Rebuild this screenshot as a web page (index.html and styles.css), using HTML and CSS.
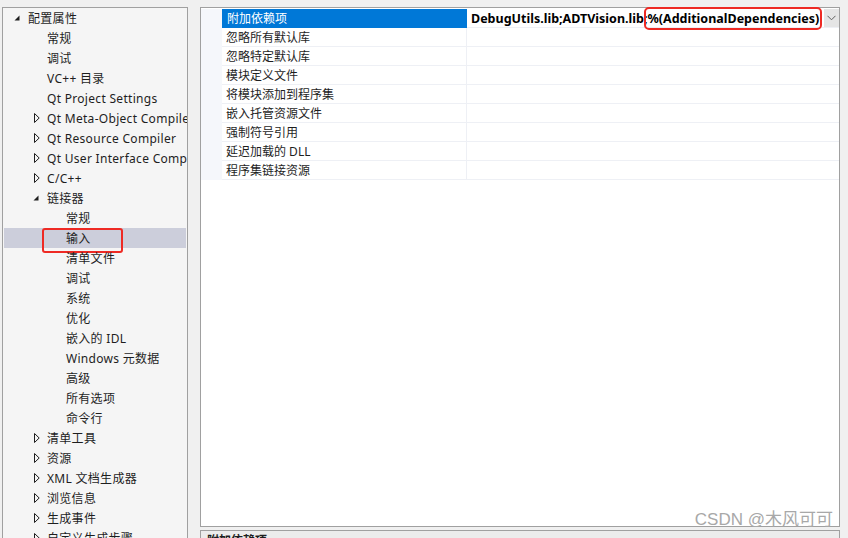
FILE: index.html
```html
<!DOCTYPE html>
<html lang="zh-CN">
<head>
  <meta charset="UTF-8" />
  <title>属性页 - 链接器 输入</title>
  <link rel="stylesheet" href="styles.css">
</head>
<body>
  <div class="dialog">
    <!-- left: configuration tree -->
    <div class="tree">
      <div class="row lv0"><span class="arrow"><svg width="6" height="6" viewBox="0 0 6 6"><path d="M5.5 0.5 L5.5 5.5 L0.5 5.5 Z" fill="#1e1e1e"/></svg></span>配置属性</div>
      <div class="row lv1"><span class="arrow"></span>常规</div>
      <div class="row lv1"><span class="arrow"></span>调试</div>
      <div class="row lv1"><span class="arrow"></span>VC++ 目录</div>
      <div class="row lv1"><span class="arrow"></span>Qt Project Settings</div>
      <div class="row lv1"><span class="arrow closed"><svg width="6" height="10" viewBox="0 0 6 10"><path d="M0.5 0.5 L5.2 5 L0.5 9.5 Z" fill="none" stroke="#1e1e1e"/></svg></span>Qt Meta-Object Compiler</div>
      <div class="row lv1"><span class="arrow closed"><svg width="6" height="10" viewBox="0 0 6 10"><path d="M0.5 0.5 L5.2 5 L0.5 9.5 Z" fill="none" stroke="#1e1e1e"/></svg></span>Qt Resource Compiler</div>
      <div class="row lv1"><span class="arrow closed"><svg width="6" height="10" viewBox="0 0 6 10"><path d="M0.5 0.5 L5.2 5 L0.5 9.5 Z" fill="none" stroke="#1e1e1e"/></svg></span>Qt User Interface Compiler</div>
      <div class="row lv1"><span class="arrow closed"><svg width="6" height="10" viewBox="0 0 6 10"><path d="M0.5 0.5 L5.2 5 L0.5 9.5 Z" fill="none" stroke="#1e1e1e"/></svg></span>C/C++</div>
      <div class="row lv1"><span class="arrow"><svg width="6" height="6" viewBox="0 0 6 6"><path d="M5.5 0.5 L5.5 5.5 L0.5 5.5 Z" fill="#1e1e1e"/></svg></span>链接器</div>
      <div class="row lv2"><span class="arrow"></span>常规</div>
      <div class="row lv2 selected"><span class="arrow"></span>输入<span class="annot"></span></div>
      <div class="row lv2"><span class="arrow"></span>清单文件</div>
      <div class="row lv2"><span class="arrow"></span>调试</div>
      <div class="row lv2"><span class="arrow"></span>系统</div>
      <div class="row lv2"><span class="arrow"></span>优化</div>
      <div class="row lv2"><span class="arrow"></span>嵌入的 IDL</div>
      <div class="row lv2"><span class="arrow"></span>Windows 元数据</div>
      <div class="row lv2"><span class="arrow"></span>高级</div>
      <div class="row lv2"><span class="arrow"></span>所有选项</div>
      <div class="row lv2"><span class="arrow"></span>命令行</div>
      <div class="row lv1"><span class="arrow closed"><svg width="6" height="10" viewBox="0 0 6 10"><path d="M0.5 0.5 L5.2 5 L0.5 9.5 Z" fill="none" stroke="#1e1e1e"/></svg></span>清单工具</div>
      <div class="row lv1"><span class="arrow closed"><svg width="6" height="10" viewBox="0 0 6 10"><path d="M0.5 0.5 L5.2 5 L0.5 9.5 Z" fill="none" stroke="#1e1e1e"/></svg></span>资源</div>
      <div class="row lv1"><span class="arrow closed"><svg width="6" height="10" viewBox="0 0 6 10"><path d="M0.5 0.5 L5.2 5 L0.5 9.5 Z" fill="none" stroke="#1e1e1e"/></svg></span>XML 文档生成器</div>
      <div class="row lv1"><span class="arrow closed"><svg width="6" height="10" viewBox="0 0 6 10"><path d="M0.5 0.5 L5.2 5 L0.5 9.5 Z" fill="none" stroke="#1e1e1e"/></svg></span>浏览信息</div>
      <div class="row lv1"><span class="arrow closed"><svg width="6" height="10" viewBox="0 0 6 10"><path d="M0.5 0.5 L5.2 5 L0.5 9.5 Z" fill="none" stroke="#1e1e1e"/></svg></span>生成事件</div>
      <div class="row lv1"><span class="arrow closed"><svg width="6" height="10" viewBox="0 0 6 10"><path d="M0.5 0.5 L5.2 5 L0.5 9.5 Z" fill="none" stroke="#1e1e1e"/></svg></span>自定义生成步骤</div>
    </div>

    <!-- right: property grid + description -->
    <div class="side">
      <div class="props">
        <div class="prop active">
          <div class="gutter"></div>
          <div class="name">附加依赖项</div>
          <div class="value">
            <span class="text">DebugUtils.lib;ADTVision.lib;<span class="mark">%(AdditionalDependencies)</span></span>
            <span class="drop"><svg width="9" height="6" viewBox="0 0 9 6"><path d="M0.5 0.8 L4.5 4.8 L8.5 0.8" fill="none" stroke="#606060"/></svg></span>
          </div>
        </div>
        <div class="prop"><div class="gutter"></div><div class="name">忽略所有默认库</div><div class="value"></div></div>
        <div class="prop"><div class="gutter"></div><div class="name">忽略特定默认库</div><div class="value"></div></div>
        <div class="prop"><div class="gutter"></div><div class="name">模块定义文件</div><div class="value"></div></div>
        <div class="prop"><div class="gutter"></div><div class="name">将模块添加到程序集</div><div class="value"></div></div>
        <div class="prop"><div class="gutter"></div><div class="name">嵌入托管资源文件</div><div class="value"></div></div>
        <div class="prop"><div class="gutter"></div><div class="name">强制符号引用</div><div class="value"></div></div>
        <div class="prop"><div class="gutter"></div><div class="name">延迟加载的 DLL</div><div class="value"></div></div>
        <div class="prop"><div class="gutter"></div><div class="name">程序集链接资源</div><div class="value"></div></div>
      </div>
      <div class="desc">
        <div class="desc-title">附加依赖项</div>
      </div>
    </div>
  </div>

  <div class="watermark">CSDN @木风可可</div>
</body>
</html>
```

FILE: styles.css
```css
/* Base */
* {
  box-sizing: border-box;
  margin: 0;
  padding: 0;
}

html, body {
  height: 100%;
}

body {
  font-family: "Noto Sans", "Noto Sans CJK SC", sans-serif;
  font-size: 12px;
  color: #1e1e1e;
  background: #f0f0f0;
  overflow: hidden;
  position: relative;
}

.dialog {
  display: flex;
  align-items: flex-start;
  padding: 7px 0 0 2px;
  gap: 12px;
  height: 100%;
  overflow: hidden;
}

/* Tree */
.tree {
  position: relative;
  width: 186px;
  height: 532px;
  flex: none;
  background: #f5f5f5;
  border: 1px solid #a0a0a0;
  border-bottom: none;
  overflow: hidden;
}

.row {
  position: relative;
  display: flex;
  align-items: center;
  height: 20px;
  margin: 0 1px;
  white-space: nowrap;
  letter-spacing: 0.3px;
}

.row.lv0 { padding-left: 9px; }
.row.lv1 { padding-left: 28px; }
.row.lv2 { padding-left: 47px; }

.row.selected {
  background: #cccedb;
}

.arrow {
  display: flex;
  align-items: center;
  width: 15px;
  height: 20px;
  flex: none;
}

.arrow svg {
  margin-left: 1px;
}

.arrow.closed svg {
  margin-left: 2px;
}

.annot {
  position: absolute;
  left: 38px;
  top: 0;
  width: 81px;
  height: 25px;
  border: 2px solid #ee2a24;
  border-radius: 3px;
}

/* Property grid */
.side {
  display: flex;
  flex-direction: column;
  gap: 3px;
  width: 640px;
  flex: none;
}

.props {
  height: 520px;
  background: #fff;
  border: 1px solid #a0a0a0;
  padding-top: 1px;
}

.prop {
  display: grid;
  grid-template-columns: 21px 245px 1fr;
  height: 19px;
  border-bottom: 1px solid #eef0f5;
}

.gutter {
  background: #f5f7fb;
}

.name {
  padding: 1px 0 0 4px;
  line-height: 18px;
  border-right: 1px solid #eef0f5;
  white-space: nowrap;
}

.prop.active .name {
  background: #0078d7;
  color: #fff;
  padding-left: 5px;
  border-right: none;
}

.value {
  display: flex;
  align-items: center;
  padding-left: 4px;
  height: 18px;
}

.value .text {
  font-size: 12.5px;
  font-weight: bold;
  color: #000;
  white-space: nowrap;
}

.mark {
  outline: 2px solid #ee2a24;
  outline-offset: 1px;
  border-radius: 2px;
}

.drop {
  display: flex;
  align-items: center;
  justify-content: center;
  margin-left: auto;
  width: 15px;
  height: 18px;
  margin-top: -1px;
  background: #e5e5e5;
}

/* Description box */
.desc {
  height: 8px;
  background: #ececec;
  border: 1px solid #a0a0a0;
  border-bottom: none;
  padding: 3px 0 0 6px;
  overflow: hidden;
}

.desc-title {
  font-weight: bold;
  line-height: 14px;
}

.watermark {
  position: absolute;
  right: 15px;
  bottom: 8px;
  font-family: "Liberation Sans", "Noto Sans CJK SC", sans-serif;
  font-size: 17px;
  color: #a8a8a8;
}
```
